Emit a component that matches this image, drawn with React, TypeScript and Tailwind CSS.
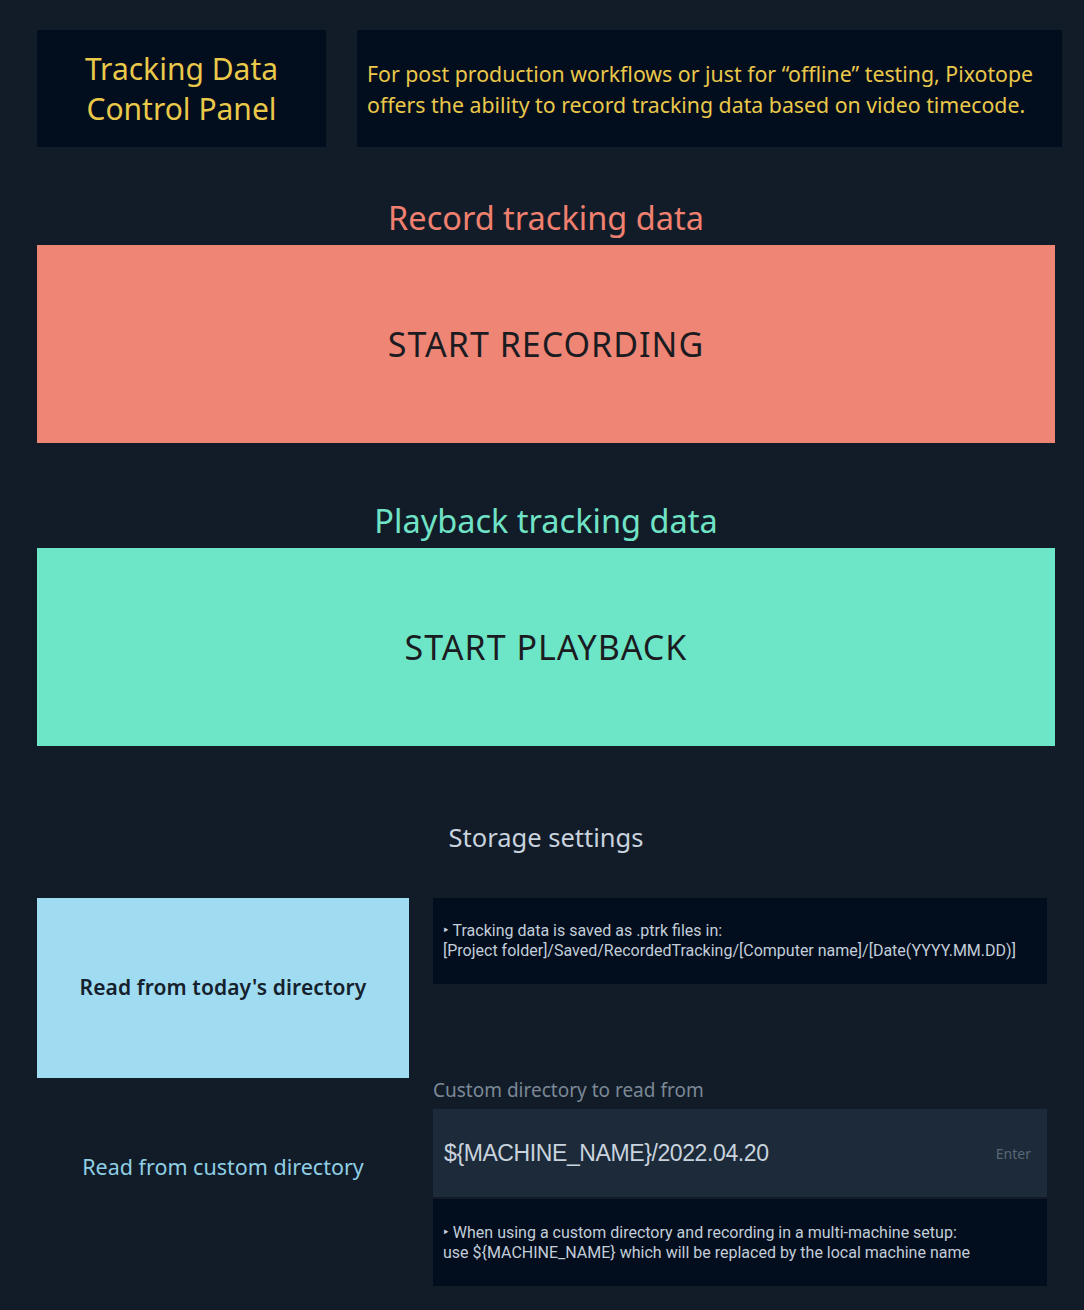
import React from "react";

const sans = { fontFamily: '"Noto Sans", "Open Sans", sans-serif' };

function InfoNote({ lines }: { lines: string[] }) {
  return (
    <div
      className="flex h-full flex-col justify-center bg-[#020d1d] px-[10px] text-[16px] leading-[20px] text-[#c3ceda]"
      style={{ fontFamily: 'Roboto, "Noto Sans", sans-serif' }}
    >
      {lines.map((l, i) => (
        <div key={i}>{l}</div>
      ))}
    </div>
  );
}

export default function App() {
  return (
    <div className="min-h-[1310px] w-[1084px] bg-[#121c28] pt-[30px]" style={sans}>
      {/* header */}
      <div className="flex gap-[31px] pl-[37px] pr-[22px]">
        <div className="flex h-[117px] w-[289px] items-center justify-center bg-[#020d1d] text-center text-[30px] leading-[40px] text-[#eac84a]">
          Tracking Data
          <br />
          Control Panel
        </div>
        <div className="flex h-[117px] flex-1 items-center bg-[#020d1d] px-[10px] text-[21.3px] leading-[31px] text-[#eac84a]">
          <div>
            For post production workflows or just for “offline” testing, Pixotope
            <br />
            offers the ability to record tracking data based on video timecode.
          </div>
        </div>
      </div>

      {/* record / playback */}
      <div className="pl-[37px] pr-[29px]">
        <div className="mt-[50px] text-center text-[32.5px] leading-[42px] text-[#f0806f]">
          Record tracking data
        </div>
        <button
          type="button"
          className="mt-[6px] flex h-[198px] w-full items-center justify-center bg-[#ef8575] text-[34px] tracking-[1px] text-[#1b1c21]"
        >
          START RECORDING
        </button>

        <div className="mt-[57px] text-center text-[32.5px] leading-[42px] text-[#70e3c7]">
          Playback tracking data
        </div>
        <button
          type="button"
          className="mt-[6px] flex h-[198px] w-full items-center justify-center bg-[#6de6c8] text-[34px] tracking-[1px] text-[#1b1c21]"
        >
          START PLAYBACK
        </button>

        <div className="mt-[74px] text-center text-[25.5px] leading-[34px] text-[#c9d3dd]">
          Storage settings
        </div>
      </div>

      {/* storage */}
      <div className="mt-[44px] grid grid-cols-[372px_614px] gap-x-[24px] pl-[37px]">
        <div className="flex h-[180px] items-center justify-center bg-[#a0dcf1] text-[21px] font-semibold tracking-[0.1px] text-[#15212c]">
          Read from today's directory
        </div>
        <div className="h-[86px]">
          <InfoNote
            lines={[
              "‣ Tracking data is saved as .ptrk files in:",
              "[Project folder]/Saved/RecordedTracking/[Computer name]/[Date(YYYY.MM.DD)]",
            ]}
          />
        </div>

        <div className="pt-[74px] text-center text-[21.5px] leading-[30px] text-[#8fcfe5]">
          Read from custom directory
        </div>
        <div className="flex flex-col">
          <div className="text-[19px] leading-[24px] text-[#7b8896]">
            Custom directory to read from
          </div>
          <div className="mt-[7px] flex h-[88px] items-center justify-between bg-[#1d2a39] pl-[11px] pr-[16px]">
            <span
              className="text-[23px] tracking-[-0.4px] text-[#c8d3de]"
              style={{ fontFamily: '"Liberation Sans", Arial, sans-serif' }}
            >
              {"${MACHINE_NAME}/2022.04.20"}
            </span>
            <span className="text-[14px] text-[#596877]">Enter</span>
          </div>
          <div className="mt-[2px] h-[87px]">
            <InfoNote
              lines={[
                "‣ When using a custom directory and recording in a multi-machine setup:",
                "use ${MACHINE_NAME} which will be replaced by the local machine name",
              ]}
            />
          </div>
        </div>
      </div>
    </div>
  );
}
